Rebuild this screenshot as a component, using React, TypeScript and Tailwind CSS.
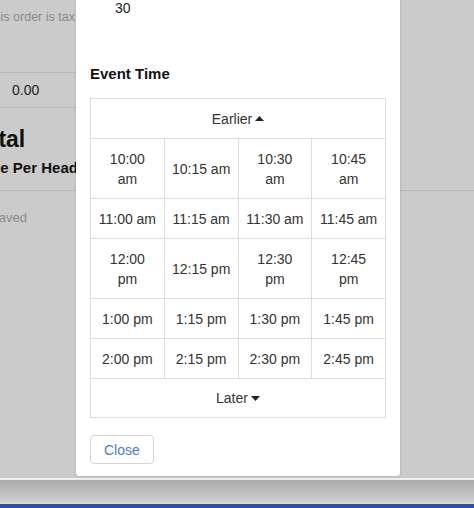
import React from "react";

type Cell = { lines: string[] };

const rows: Cell[][] = [
  [{ lines: ["10:00", "am"] }, { lines: ["10:15 am"] }, { lines: ["10:30", "am"] }, { lines: ["10:45", "am"] }],
  [{ lines: ["11:00 am"] }, { lines: ["11:15 am"] }, { lines: ["11:30 am"] }, { lines: ["11:45 am"] }],
  [{ lines: ["12:00", "pm"] }, { lines: ["12:15 pm"] }, { lines: ["12:30", "pm"] }, { lines: ["12:45", "pm"] }],
  [{ lines: ["1:00 pm"] }, { lines: ["1:15 pm"] }, { lines: ["1:30 pm"] }, { lines: ["1:45 pm"] }],
  [{ lines: ["2:00 pm"] }, { lines: ["2:15 pm"] }, { lines: ["2:30 pm"] }, { lines: ["2:45 pm"] }],
];

function Caret({ up }: { up?: boolean }) {
  return (
    <svg className="ml-[3px] inline-block" width="9" height="5" viewBox="0 0 9 5">
      {up ? <path d="M0 5 L4.5 0 L9 5 Z" fill="#222" /> : <path d="M0 0 L9 0 L4.5 5 Z" fill="#222" />}
    </svg>
  );
}

export default function App() {
  return (
    <div className="flex h-[508px] w-full flex-col overflow-hidden bg-[#cbcbcb] font-['Liberation_Sans',Arial,sans-serif]">
      <div className="relative flex-1">
        {/* page underneath the overlay */}
        <div className="flex flex-col">
          <p className="ml-[-14px] whitespace-nowrap pt-[9px] text-[12.5px] leading-[16px] text-[#8a8a8a]">This order is tax exempt</p>
          <div className="mt-[47px] w-[80px] border-y border-[#b8b8b8] py-[7px] pl-[12px] text-[14px] leading-[20px] text-[#222]">0.00</div>
          <p className="ml-[-28px] mt-[18px] whitespace-nowrap text-[23px] font-bold leading-[26px] text-[#111]">Total</p>
          <p className="ml-[-28px] mt-[7px] whitespace-nowrap text-[15px] font-bold leading-[18px] text-[#111]">Price Per Head</p>
          <div className="mt-[13px] border-b border-[#b8b8b8]" />
          <p className="ml-[-10px] mt-[19px] whitespace-nowrap text-[13px] leading-[16px] text-[#8a8a8a]">Saved</p>
        </div>

        {/* modal */}
        <div className="absolute bottom-[2px] left-[76px] top-0 flex w-[324px] flex-col rounded-b-[3px] bg-white px-[14px] text-[#333] shadow-[0_0_3px_rgba(0,0,0,0.18)]">
          <p className="pl-[25px] text-[14px] leading-[16px] text-[#222]">30</p>
          <p className="mt-[48px] text-[15px] font-bold leading-[20px] text-[#111]">Event Time</p>
          <div className="mt-[14px] grid grid-cols-4 gap-px border border-[#dddddd] bg-[#dddddd] text-[14px] leading-[20px] text-[#333]">
            <div className="col-span-4 flex items-center justify-center bg-white py-[9.5px]">
              Earlier
              <Caret up />
            </div>
            {rows.map((row, i) =>
              row.map((c, j) => (
                <div key={i + "-" + j} className="flex flex-col items-center justify-center bg-white py-[9.5px] text-center">
                  {c.lines.map((l) => (
                    <span key={l}>{l}</span>
                  ))}
                </div>
              ))
            )}
            <div className="col-span-4 flex items-center justify-center bg-white py-[9px]">
              Later
              <Caret />
            </div>
          </div>
          <div className="mt-[17px] flex">
            <button className="h-[29px] rounded-[4px] border border-[#d4d4d4] bg-white px-[13px] text-[14px] leading-[20px] text-[#4a7cc3]">
              Close
            </button>
          </div>
        </div>
      </div>
      <div className="h-[2px] bg-[#eeeeee]" />
      <div className="h-[23px] bg-gradient-to-b from-[#a9a9a9] to-[#d2d2d2]" />
      <div className="h-px bg-[#dcdcdc]" />
      <div className="h-[4px] bg-[#2a4fb3]" />
    </div>
  );
}
